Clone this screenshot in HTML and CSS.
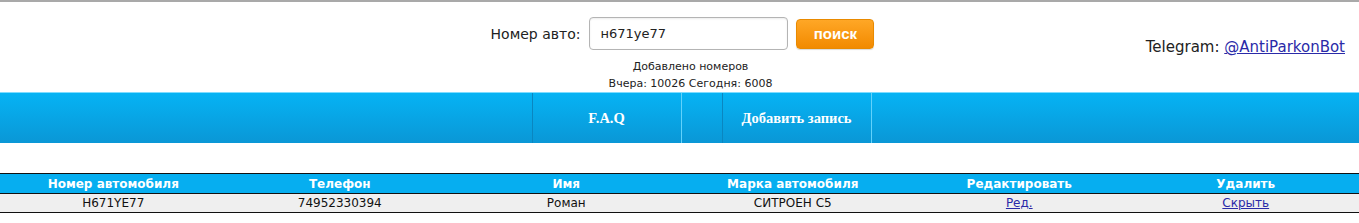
FILE: index.html
```html
<!DOCTYPE html>
<html lang="ru">
<head>
<meta charset="utf-8">
<link rel="stylesheet" href="styles.css">
</head>
<body>
<header class="top">
  <div class="side"></div>
  <div class="center">
    <form class="search">
      <label class="search-label">Номер авто:</label>
      <input class="search-input" type="text" value="н671уе77">
      <button class="search-btn" type="button">поиск</button>
    </form>
    <div class="stats">
      <div>Добавлено номеров</div>
      <div>Вчера: 10026 Сегодня: 6008</div>
    </div>
  </div>
  <div class="side right">
    <div class="telegram">Telegram: <a href="#">@AntiParkonBot</a></div>
  </div>
</header>
<nav class="nav">
  <a class="nav-item" href="#">F.A.Q</a>
  <a class="nav-item" href="#">Добавить запись</a>
</nav>
<table class="grid">
  <thead>
    <tr>
      <th>Номер автомобиля</th>
      <th>Телефон</th>
      <th>Имя</th>
      <th>Марка автомобиля</th>
      <th>Редактировать</th>
      <th>Удалить</th>
    </tr>
  </thead>
  <tbody>
    <tr>
      <td>H671YE77</td>
      <td>74952330394</td>
      <td>Роман</td>
      <td>СИТРОЕН C5</td>
      <td><a href="#">Ред.</a></td>
      <td><a href="#">Скрыть</a></td>
    </tr>
  </tbody>
</table>
</body>
</html>
```
FILE: styles.css
```css
html, body {
  margin: 0;
  padding: 0;
  background: #fff;
}
body {
  font-family: "DejaVu Sans", Verdana, sans-serif;
  color: #111;
}
.top {
  border-top: 2px solid #a9a9a9;
  height: 92px;
  display: grid;
  grid-template-columns: 1fr auto 1fr;
  box-sizing: border-box;
}
.center {
  padding-top: 15px;
  display: flex;
  flex-direction: column;
  align-items: center;
}
.search {
  display: flex;
  align-items: center;
  margin: 0 0 0 6px;
}
.search-label {
  font-size: 14px;
  color: #222;
  margin-right: 9px;
}
.search-input {
  width: 199px;
  height: 33px;
  box-sizing: border-box;
  border: 1px solid #b4b4b4;
  border-radius: 4px;
  padding: 0 10px;
  font-family: "DejaVu Sans", Verdana, sans-serif;
  font-size: 13px;
  color: #222;
  box-shadow: inset 0 1px 2px rgba(0,0,0,0.08);
  margin: 0;
}
.search-btn {
  margin-left: 8px;
  width: 78px;
  height: 30px;
  border: 1px solid #e98a00;
  border-radius: 4px;
  background: linear-gradient(#ffa726, #f28a00);
  color: #fff;
  font-family: "Liberation Sans", Arial, sans-serif;
  font-weight: bold;
  font-size: 15px;
  padding: 0;
  box-shadow: 0 1px 1px rgba(0,0,0,0.15);
}
.stats {
  margin-top: 8px;
  margin-left: 22px;
  font-size: 11px;
  line-height: 17px;
  text-align: center;
  color: #222;
}
.right {
  display: flex;
  justify-content: flex-end;
  padding-right: 14px;
  padding-top: 36px;
}
.telegram {
  font-size: 15px;
  color: #222;
}
.telegram a {
  color: #2a2aa8;
}
.nav {
  height: 51px;
  border-top: 1px solid #7fdcff;
  background: linear-gradient(#06b3f4, #0a97d6);
  display: flex;
  justify-content: center;
  gap: 40px;
  padding-left: 44px;
  box-sizing: border-box;
}
.nav-item {
  width: 150px;
  box-sizing: border-box;
  border-left: 1px solid #0a86c0;
  border-right: 1px solid #62d2fb;
  display: flex;
  align-items: center;
  justify-content: center;
  color: #fff;
  text-decoration: none;
  font-family: "Liberation Serif", "Times New Roman", serif;
  font-weight: bold;
  font-size: 14.5px;
}
.grid {
  margin-top: 30px;
  width: 100%;
  border-collapse: collapse;
  table-layout: fixed;
  font-size: 12px;
}
.grid th {
  background: #06aef0;
  color: #fff;
  font-weight: bold;
  height: 19px;
  padding: 0;
  border-top: 1px solid #111;
  border-bottom: 1px solid #111;
}
.grid td {
  background: #efefef;
  text-align: center;
  height: 18px;
  padding: 0;
  color: #111;
  border-bottom: 1px solid #111;
}
.grid td a {
  color: #2a2aa8;
}
```
